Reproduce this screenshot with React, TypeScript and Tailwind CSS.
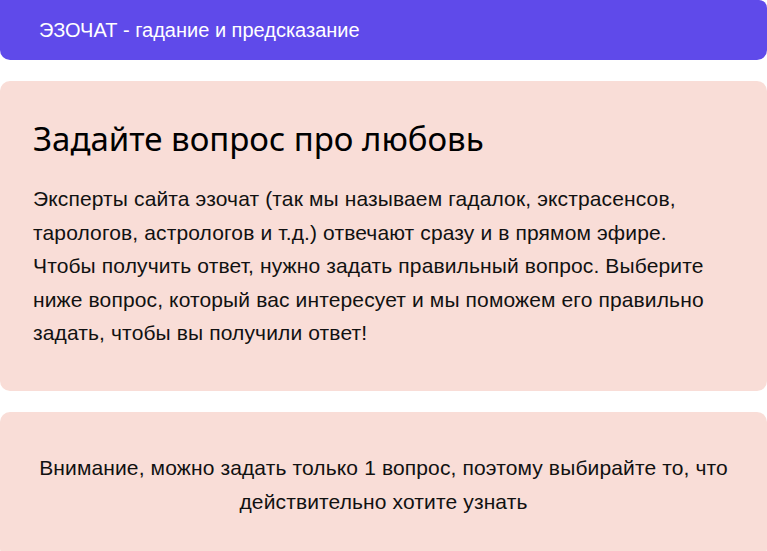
const BODY_FONT = "font-['Liberation_Sans',Arial,sans-serif]";

export default function App() {
  return (
    <div className="min-h-[551px] bg-white">
      <header className="flex h-[60px] items-center rounded-b-[10px] rounded-tr-[8px] bg-[#5f4aea] px-[39px]">
        <span className={`${BODY_FONT} text-[20px] text-white`}>ЭЗОЧАТ - гадание и предсказание</span>
      </header>

      <section className="mt-[21px] rounded-[10px] bg-[#f9ddd7] px-[33px] pb-[41px] pt-[36px]">
        <h1 className="font-['Noto_Sans',sans-serif] text-[33px] leading-[44px] text-black">
          Задайте вопрос про любовь
        </h1>
        <p className={`${BODY_FONT} mt-[21px] text-[21px] leading-[33.5px] tracking-[0.13px] text-[#111]`}>
          Эксперты сайта эзочат (так мы называем гадалок, экстрасенсов,
          <br />
          тарологов, астрологов и т.д.) отвечают сразу и в прямом эфире.
          <br />
          Чтобы получить ответ, нужно задать правильный вопрос. Выберите
          <br />
          ниже вопрос, который вас интересует и мы поможем его правильно
          <br />
          задать, чтобы вы получили ответ!
        </p>
      </section>

      <section className="mt-[21px] rounded-[10px] bg-[#f9ddd7] px-[20px] pb-[40px] pt-[39px]">
        <p className={`${BODY_FONT} text-center text-[21px] leading-[34px] tracking-[0.13px] text-[#111]`}>
          Внимание, можно задать только 1 вопрос, поэтому выбирайте то, что
          <br />
          действительно хотите узнать
        </p>
      </section>
    </div>
  );
}
